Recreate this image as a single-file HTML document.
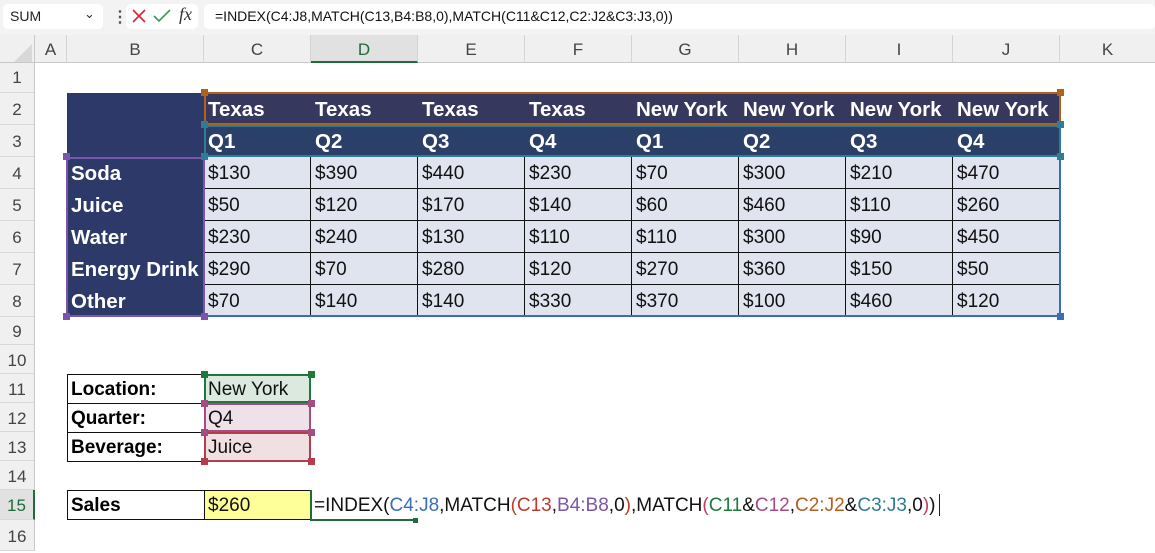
<!DOCTYPE html>
<html><head><meta charset="utf-8"><style>
*{margin:0;padding:0;box-sizing:border-box}
body{width:1155px;height:551px;overflow:hidden;background:#fff;font-family:"Liberation Sans",Arial,sans-serif;position:relative}
.a{position:absolute}
.top{left:0;top:0;width:1155px;height:35px;background:#f3f3f3}
.box{background:#fff;border-radius:5px;height:25px;top:4px}
.colh{top:35px;height:28px;background:#f0f0f0;border-right:1px solid #d4d4d4;border-bottom:1px solid #c8c8c8;font-size:17px;color:#444;text-align:center;line-height:30px}
.rowh{left:0;width:35px;background:#f0f0f0;border-bottom:1px solid #d8d8d8;border-right:1px solid #c8c8c8;font-size:17px;color:#444;text-align:center}
.c{font-size:19px;padding-left:4px;white-space:nowrap;overflow:visible}
.hd{color:#fff;font-weight:bold;font-size:20.5px}
.dat{background:#dfe4ee;border-right:1.5px solid #111;border-bottom:1.5px solid #111;color:#111}
.h{width:7px;height:7px}
</style></head><body>
<div class="a top"></div>
<div class="a box" style="left:3px;width:100px"></div>
<div class="a" style="left:10px;top:8px;font-size:14px;color:#222">SUM</div>
<div class="a" style="left:84px;top:6px;font-size:13px;color:#333">&#8964;</div>
<div class="a" style="left:112px;top:7px;font-size:16px;color:#555;font-weight:bold">&#8942;</div>
<div class="a box" style="left:126px;width:72px"></div>
<svg class="a" style="left:131px;top:8px" width="16" height="16"><path d="M2 2L14 14M14 2L2 14" stroke="#d23" stroke-width="1.6"/></svg>
<svg class="a" style="left:153px;top:8px" width="18" height="16"><path d="M1 8L6 13L17 2" stroke="#3a9a5a" stroke-width="1.6" fill="none"/></svg>
<div class="a" style="left:179px;top:4px;font-family:'Liberation Serif',serif;font-style:italic;font-size:18px;color:#333">fx</div>
<div class="a box" style="left:204px;width:951px"></div>
<div class="a" style="left:215px;top:8px;font-size:14px;color:#111">=INDEX(C4:J8,MATCH(C13,B4:B8,0),MATCH(C11&amp;C12,C2:J2&amp;C3:J3,0))</div>

<div class="a" style="left:0;top:35px;width:35px;height:28px;background:#f0f0f0;border-right:1px solid #c8c8c8;border-bottom:1px solid #c8c8c8"></div>
<svg class="a" style="left:14px;top:44px" width="18" height="18"><path d="M18 0L18 18L0 18Z" fill="#d8d8d8"/></svg>
<div class="a colh" style="left:35px;width:32px">A</div>
<div class="a colh" style="left:67px;width:137px">B</div>
<div class="a colh" style="left:204px;width:107px">C</div>
<div class="a colh" style="left:311px;width:107px;background:#e1e1e1;color:#1e6b3c;border-bottom:2px solid #1e6b3c">D</div>
<div class="a colh" style="left:418px;width:107px">E</div>
<div class="a colh" style="left:525px;width:107px">F</div>
<div class="a colh" style="left:632px;width:107px">G</div>
<div class="a colh" style="left:739px;width:107px">H</div>
<div class="a colh" style="left:846px;width:107px">I</div>
<div class="a colh" style="left:953px;width:107px">J</div>
<div class="a colh" style="left:1060px;width:95px;border-right:none">K</div>

<div class="a rowh" style="top:63px;height:30px;line-height:30px">1</div>
<div class="a rowh" style="top:93px;height:32px;line-height:34px">2</div>
<div class="a rowh" style="top:125px;height:32px;line-height:34px">3</div>
<div class="a rowh" style="top:157px;height:32px;line-height:34px">4</div>
<div class="a rowh" style="top:189px;height:32px;line-height:34px">5</div>
<div class="a rowh" style="top:221px;height:32px;line-height:34px">6</div>
<div class="a rowh" style="top:253px;height:32px;line-height:34px">7</div>
<div class="a rowh" style="top:285px;height:32px;line-height:34px">8</div>
<div class="a rowh" style="top:317px;height:28px;line-height:30px">9</div>
<div class="a rowh" style="top:345px;height:29px;line-height:31px">10</div>
<div class="a rowh" style="top:374px;height:29px;line-height:31px">11</div>
<div class="a rowh" style="top:403px;height:29px;line-height:31px">12</div>
<div class="a rowh" style="top:432px;height:29px;line-height:31px">13</div>
<div class="a rowh" style="top:461px;height:29px;line-height:31px">14</div>
<div class="a rowh" style="top:490px;height:30px;line-height:32px;background:#e1e1e1;color:#1e6b3c;border-right:2px solid #1e6b3c">15</div>
<div class="a rowh" style="top:520px;height:31px;line-height:33px">16</div>

<div class="a" style="left:67px;top:93px;width:137px;height:224px;background:#2d3a69"></div>
<div class="a" style="left:204px;top:93px;width:856px;height:32px;background:#37385e"></div>
<div class="a" style="left:204px;top:125px;width:856px;height:32px;background:#2a4068"></div>
<div id="g"></div>
<script>
var cols=[204,311,418,525,632,739,846,953,1060];
var st=["Texas","Texas","Texas","Texas","New York","New York","New York","New York"];
var data=[["$130","$390","$440","$230","$70","$300","$210","$470"],["$50","$120","$170","$140","$60","$460","$110","$260"],["$230","$240","$130","$110","$110","$300","$90","$450"],["$290","$70","$280","$120","$270","$360","$150","$50"],["$70","$140","$140","$330","$370","$100","$460","$120"]];
var bev=["Soda","Juice","Water","Energy Drink","Other"];
var h="";
for(var i=0;i<8;i++){
h+='<div class="a c hd" style="left:'+cols[i]+'px;top:93px;height:32px;line-height:34px">'+st[i]+'</div>';
h+='<div class="a c hd" style="left:'+cols[i]+'px;top:125px;height:32px;line-height:34px">Q'+(i%4+1)+'</div>';
for(var r=0;r<5;r++){h+='<div class="a c dat" style="left:'+cols[i]+'px;top:'+(157+32*r)+'px;width:107px;height:32px;line-height:34px">'+data[r][i]+'</div>';}
}
for(var r=0;r<5;r++)h+='<div class="a c hd" style="left:67px;top:'+(157+32*r)+'px;height:32px;line-height:34px">'+bev[r]+'</div>';
document.getElementById("g").outerHTML=h;
</script>
<div class="a" style="left:204px;top:92px;width:857px;height:33px;border:2px solid #b45f1a"></div>
<div class="a" style="left:204px;top:125px;width:857px;height:32px;border:2px solid #2e7d95"></div>
<div class="a" style="left:66px;top:157px;width:139px;height:160px;border:2px solid #7b55a8"></div>
<div class="a" style="left:204px;top:157px;width:857px;height:160px;border-right:2px solid #3a6fb8;border-bottom:2px solid #3a6fb8"></div>
<div class="a h" style="left:201px;top:89px;background:#b45f1a"></div>
<div class="a h" style="left:1057px;top:89px;background:#b45f1a"></div>
<div class="a h" style="left:201px;top:121px;background:#2e7d95"></div>
<div class="a h" style="left:1057px;top:121px;background:#2e7d95"></div>
<div class="a h" style="left:201px;top:153px;background:#2e7d95"></div>
<div class="a h" style="left:1057px;top:153px;background:#2e7d95"></div>
<div class="a h" style="left:63px;top:153px;background:#7b55a8"></div>
<div class="a h" style="left:63px;top:313px;background:#7b55a8"></div>
<div class="a h" style="left:201px;top:313px;background:#7b55a8"></div>
<div class="a h" style="left:1057px;top:313px;background:#3a6fb8"></div>

<div class="a" style="left:67px;top:374px;width:244px;height:88px;border:1.5px solid #111"></div>
<div class="a" style="left:67px;top:403px;width:137px;border-top:1.5px solid #111"></div>
<div class="a" style="left:67px;top:432px;width:137px;border-top:1.5px solid #111"></div>
<div class="a" style="left:204px;top:374px;width:107px;height:29px;background:#dbe9df;border:2px solid #1e7a3c"></div>
<div class="a" style="left:204px;top:403px;width:107px;height:29px;background:#efe1e8;border:2px solid #a44d85"></div>
<div class="a" style="left:204px;top:432px;width:107px;height:30px;background:#f1e0e2;border:2px solid #b33c4d"></div>
<div class="a c" style="left:67px;top:374px;height:29px;line-height:31px;font-weight:bold;color:#000">Location:</div>
<div class="a c" style="left:67px;top:403px;height:29px;line-height:31px;font-weight:bold;color:#000">Quarter:</div>
<div class="a c" style="left:67px;top:432px;height:29px;line-height:31px;font-weight:bold;color:#000">Beverage:</div>
<div class="a c" style="left:204px;top:374px;height:29px;line-height:31px;color:#111">New York</div>
<div class="a c" style="left:204px;top:403px;height:29px;line-height:31px;color:#111">Q4</div>
<div class="a c" style="left:204px;top:432px;height:29px;line-height:31px;color:#111">Juice</div>
<div class="a h" style="left:201px;top:371px;background:#1e7a3c"></div>
<div class="a h" style="left:308px;top:371px;background:#1e7a3c"></div>
<div class="a h" style="left:201px;top:400px;background:#a44d85"></div>
<div class="a h" style="left:308px;top:400px;background:#a44d85"></div>
<div class="a h" style="left:201px;top:429px;background:#a44d85"></div>
<div class="a h" style="left:308px;top:429px;background:#a44d85"></div>
<div class="a h" style="left:201px;top:458px;background:#b33c4d"></div>
<div class="a h" style="left:308px;top:458px;background:#b33c4d"></div>

<div class="a" style="left:67px;top:490px;width:244px;height:30px;border:1.5px solid #111"></div>
<div class="a" style="left:204px;top:490px;width:107px;height:30px;background:#ffff99;border-left:1.5px solid #111;border-top:1.5px solid #111;border-bottom:1.5px solid #111"></div>
<div class="a c" style="left:67px;top:490px;height:30px;line-height:32px;font-weight:bold;color:#000">Sales</div>
<div class="a c" style="left:204px;top:490px;height:30px;line-height:32px;color:#111">$260</div>
<div class="a" style="left:310px;top:490px;width:107px;height:31px;border-left:2px solid #1e6b3c;border-bottom:2px solid #1e6b3c"></div>
<div class="a" style="left:413px;top:518px;width:5px;height:5px;background:#1e6b3c"></div>
<div class="a c" style="left:310px;top:490px;height:30px;line-height:32px;color:#111">=INDEX(<span style="color:#3a6fb8">C4:J8</span>,MATCH<span style="color:#c0392b">(C13</span>,<span style="color:#7b55a8">B4:B8</span>,0<span style="color:#c0392b">)</span>,MATCH<span style="color:#c23b5c">(</span><span style="color:#1e7a3c">C11</span>&amp;<span style="color:#a44d85">C12</span>,<span style="color:#b45f1a">C2:J2</span>&amp;<span style="color:#2e7d95">C3:J3</span>,0<span style="color:#c23b5c">)</span>)</div>
<div class="a" style="left:939px;top:494px;width:1px;height:22px;background:#222"></div>
</body></html>
